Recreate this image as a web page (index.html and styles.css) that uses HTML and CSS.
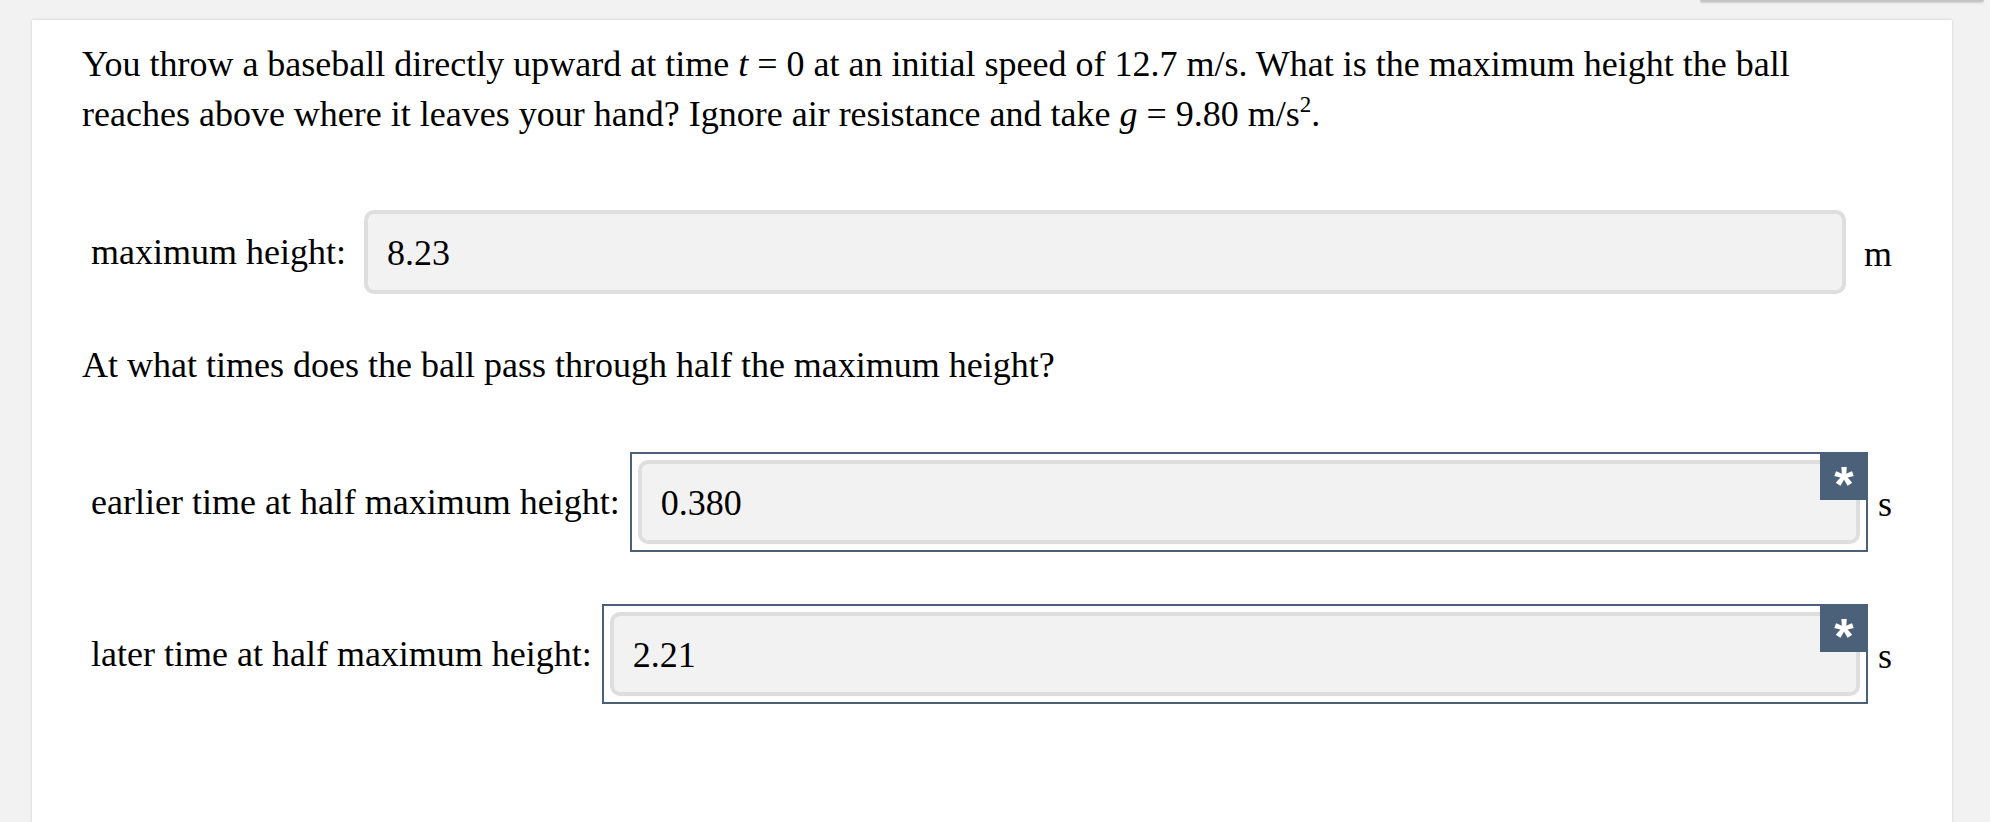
FILE: index.html
```html
<!DOCTYPE html>
<html lang="en">
<head>
    <meta charset="UTF-8">
    <title>Question</title>
    <link rel="stylesheet" href="styles.css">
</head>
<body>

    <div class="topbar"></div>

    <div class="card">
        <p class="question">You throw a baseball directly upward at time <span class="math"><i>t</i><span class="eq">=</span>0</span> at an initial speed of 12.7 m/s. What is the maximum height the ball reaches above where it leaves your hand? Ignore air resistance and take <span class="math"><i>g</i><span class="eq">=</span>9.80 m/s<sup>2</sup></span>.</p>

        <div class="row row-first">
            <label class="label">maximum height:</label>
            <div class="field">
                <div class="input">8.23</div>
            </div>
            <span class="unit">m</span>
        </div>

        <p class="question q2">At what times does the ball pass through half the maximum height?</p>

        <div class="row row-second">
            <label class="label">earlier time at half maximum height:</label>
            <div class="field marked">
                <div class="input">0.380</div>
                <span class="badge">*</span>
            </div>
            <span class="unit">s</span>
        </div>

        <div class="row row-third">
            <label class="label">later time at half maximum height:</label>
            <div class="field marked">
                <div class="input">2.21</div>
                <span class="badge">*</span>
            </div>
            <span class="unit">s</span>
        </div>
    </div>

</body>
</html>
```

FILE: styles.css
```css
body {
    font-family: "Liberation Serif", "Times New Roman", serif;
    background: #f2f2f2;
    color: #000;
    margin: 0;
    padding: 20px 38px 0 32px;
    overflow: hidden;
    height: 822px;
    box-sizing: border-box;
}

.topbar {
    position: absolute;
    top: 0;
    left: 1700px;
    width: 284px;
    height: 2px;
    background: #c4c4c4;
    border-radius: 0 0 3px 3px;
    box-shadow: 0 1px 2px rgba(0, 0, 0, 0.15);
}

.card {
    background: white;
    height: 900px;
    padding: 19px 50px 0 50px;
    box-shadow: 0 0 3px rgba(0, 0, 0, 0.15);
    font-size: 36px;
}

.question {
    margin: 0;
    line-height: 50px;
}

.math {
    white-space: nowrap;
}

.math i {
    font-style: italic;
}

.eq {
    padding: 0 9px;
}

sup {
    font-size: 23px;
    line-height: 0;
    vertical-align: 14px;
}

.q2 {
    margin-top: 38px;
}

.row {
    display: flex;
    align-items: center;
    padding: 0 10px 0 9px;
}

.row-first {
    margin-top: 63px;
}

.row-second {
    margin-top: 62px;
}

.row-third {
    margin-top: 52px;
}

.label {
    padding-right: 10px;
    white-space: nowrap;
}

.field {
    flex: 1;
    position: relative;
    padding: 6px;
    border: 2px solid transparent;
}

.field.marked {
    border-color: #4a6179;
}

.input {
    height: 84px;
    box-sizing: border-box;
    background: #f2f2f2;
    border: 4px solid #dedede;
    border-radius: 10px;
    padding: 2px 19px 0;
    display: flex;
    align-items: center;
    line-height: 1;
}

.badge {
    position: absolute;
    top: -2px;
    right: -2px;
    width: 48px;
    height: 48px;
    box-sizing: border-box;
    padding-top: 18px;
    background: #4a6179;
    color: white;
    font-family: "Liberation Sans", sans-serif;
    font-weight: bold;
    font-size: 50px;
    text-align: center;
    line-height: 30px;
}

.unit {
    padding-left: 10px;
    padding-top: 4px;
}
```
